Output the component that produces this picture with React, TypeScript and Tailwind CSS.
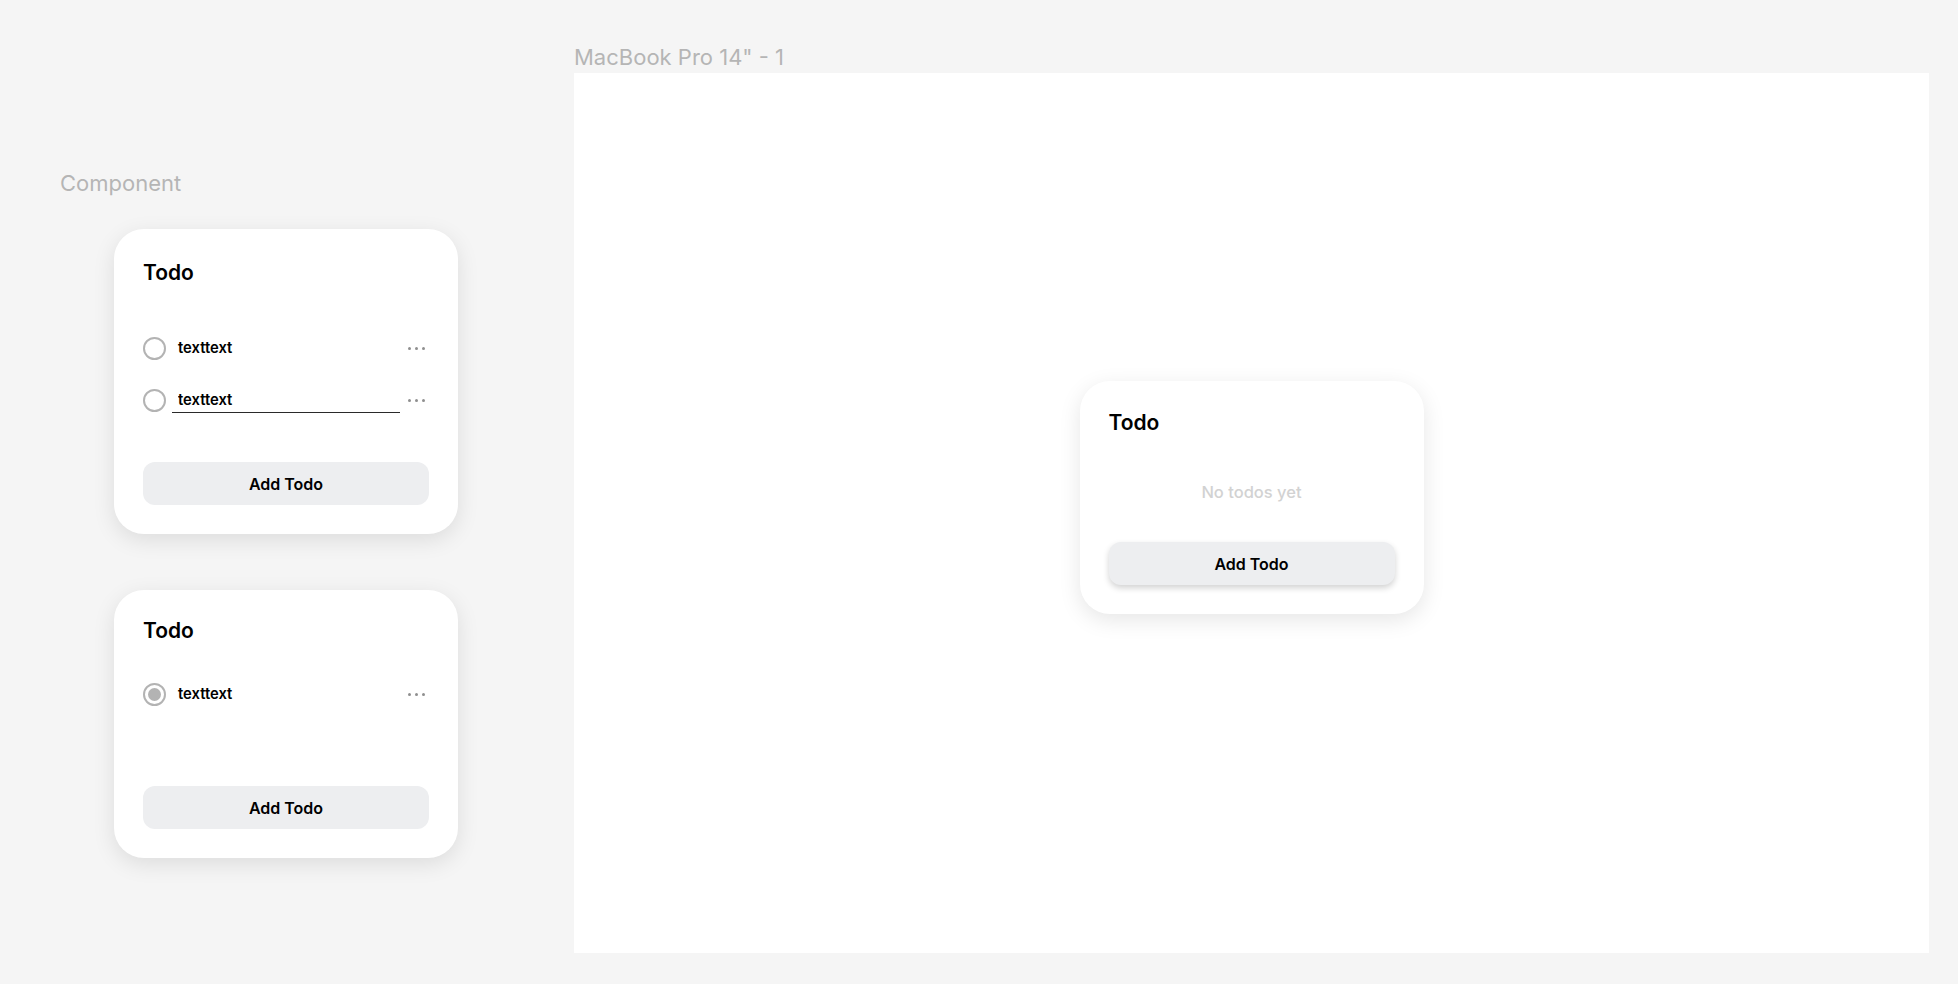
import { useState } from "react";

type Todo = { id: number; text: string; done: boolean; editing?: boolean };

function Dots() {
  return (
    <button className="mr-[1px] flex h-6 w-6 shrink-0 items-center justify-center gap-[4px]">
      <span className="h-[3px] w-[3px] rounded-full bg-[#8f8f8f]" />
      <span className="h-[3px] w-[3px] rounded-full bg-[#8f8f8f]" />
      <span className="h-[3px] w-[3px] rounded-full bg-[#8f8f8f]" />
    </button>
  );
}

function TodoRow({ todo }: { todo: Todo }) {
  return (
    <div className="flex h-6 items-center gap-[4px]">
      <span className="flex h-[23px] w-[23px] shrink-0 items-center justify-center rounded-full border-2 border-[#b3b3b3]">
        {todo.done && <span className="h-[13px] w-[13px] rounded-full bg-[#b3b3b3]" />}
      </span>
      <div className="ml-[2px] flex-1">
        {todo.editing ? (
          <input
            defaultValue={todo.text}
            className="h-6 w-full border-b-[1.5px] border-[#2a2a2a] pl-[6px] text-[14.8px] font-semibold text-black outline-none"
          />
        ) : (
          <span className="block h-6 pl-[6px] text-[14.8px] leading-6 font-semibold text-black">{todo.text}</span>
        )}
      </div>
      <Dots />
    </div>
  );
}

function TodoCard({
  todos,
  className,
  listClass,
  raised,
}: {
  todos: Todo[];
  className: string;
  listClass: string;
  raised?: boolean;
}) {
  return (
    <div className={`w-[344px] rounded-[30px] bg-white px-[29px] pb-[29px] shadow-[0_6px_22px_rgba(0,0,0,0.10)] ${className}`}>
      <h2 className="h-7 text-[21px] leading-7 font-semibold text-black">Todo</h2>
      <div className={listClass}>
        {todos.length === 0 ? (
          <p className="text-center text-[16.5px] leading-6 font-medium text-[#d2d2d2]">No todos yet</p>
        ) : (
          <div className="flex flex-col gap-[28px]">
            {todos.map((t) => (
              <TodoRow key={t.id} todo={t} />
            ))}
          </div>
        )}
      </div>
      <button
        className={`h-[43px] w-full rounded-[12px] bg-[#edeef0] text-[16px] font-semibold text-black ${
          raised ? "shadow-[0_3px_6px_rgba(0,0,0,0.18)]" : ""
        }`}
      >
        Add Todo
      </button>
    </div>
  );
}

export default function App() {
  const [todos] = useState<Todo[]>([]);

  return (
    <div
      className="flex min-h-screen bg-[#f5f5f5]"
      style={{ fontFamily: "Inter, 'Noto Sans', 'Liberation Sans', sans-serif" }}
    >
      <div className="w-[574px] shrink-0 pl-[60px] pt-[169px]">
        <div className="h-7 text-[22px] leading-7 text-[#b5b5b5]">Component</div>
        <div className="ml-[54px] mt-[32px] flex flex-col gap-[56px]">
          <TodoCard
            className="pt-[30px]"
            listClass="mt-[49px] mb-[50px]"
            todos={[
              { id: 1, text: "texttext", done: false },
              { id: 2, text: "texttext", done: false, editing: true },
            ]}
          />
          <TodoCard
            className="pt-[27px]"
            listClass="mt-[37px] mb-[80px]"
            todos={[{ id: 3, text: "texttext", done: true }]}
          />
        </div>
      </div>

      <div className="w-[1355px] shrink-0 pt-[43px]">
        <div className="h-7 text-[22px] leading-7 text-[#b5b5b5]">MacBook Pro 14" - 1</div>
        <div className="mt-[2px] flex h-[880px] justify-center bg-white pt-[308px]">
          <TodoCard className="h-fit pt-[28px]" listClass="mt-[43px] mb-[38px]" todos={todos} raised />
        </div>
      </div>
    </div>
  );
}
